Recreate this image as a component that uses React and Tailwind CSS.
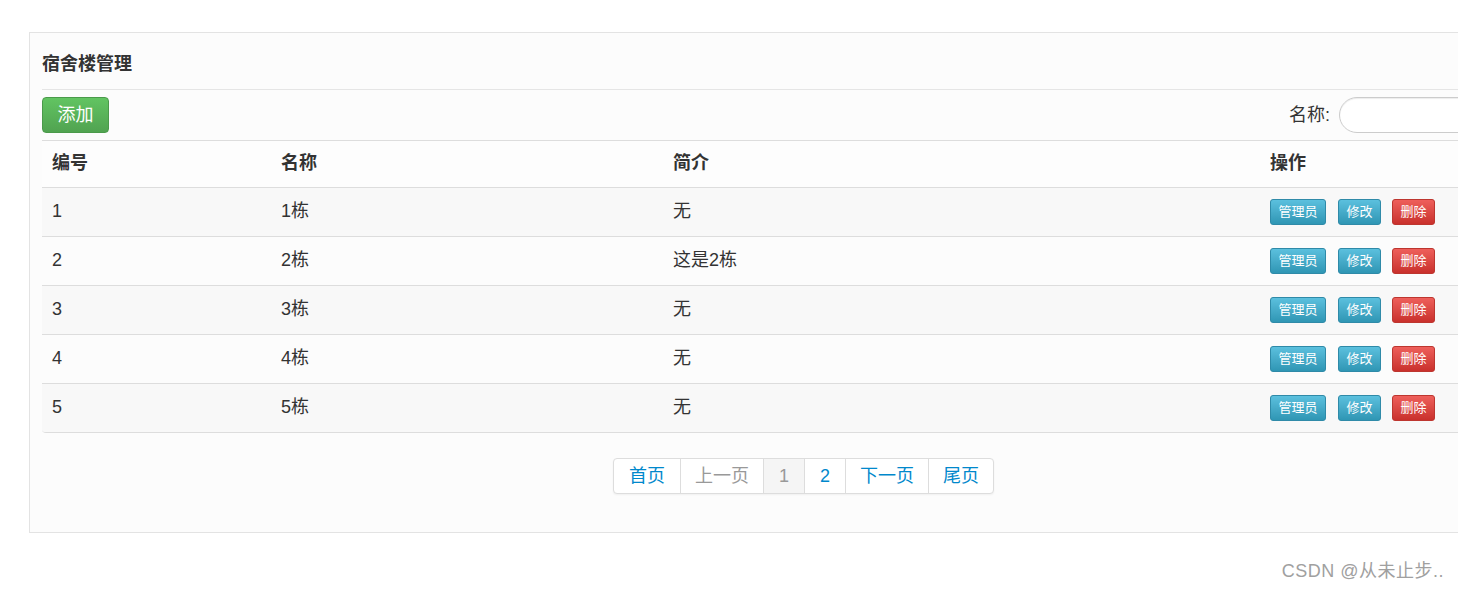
import React from "react";

const rows = [
  { id: 1, name: "1栋", desc: "无" },
  { id: 2, name: "2栋", desc: "这是2栋" },
  { id: 3, name: "3栋", desc: "无" },
  { id: 4, name: "4栋", desc: "无" },
  { id: 5, name: "5栋", desc: "无" },
];

const font = { fontFamily: '"Liberation Sans", "Noto Sans CJK SC", sans-serif' };

const MiniBtn = ({ children, danger, w }) => (
  <button
    className={`h-[26px] ${w} rounded-[3px] text-[13px] text-white border leading-none ${
      danger
        ? "bg-gradient-to-b from-[#ee5f5b] to-[#c9302c] border-[#bd362f]"
        : "bg-gradient-to-b from-[#5bc0de] to-[#2f96b4] border-[#2f8aa8]"
    }`}
  >
    {children}
  </button>
);

export default function App() {
  return (
    <div className="w-[1458px] h-[590px] overflow-hidden bg-white text-[#333]" style={font}>
      <div className="ml-[29px] mt-[32px] w-[1549px] border border-[#e3e3e3] bg-[#fcfcfc]">
        {/* title */}
        <div className="mx-[12px] h-[57px] pt-[7px] flex items-center border-b border-[#e5e5e5]">
          <h2 className="text-[18px] font-bold text-[#333]">宿舍楼管理</h2>
        </div>

        {/* toolbar */}
        <div className="mx-[12px] py-[7px] flex items-center justify-between">
          <button className="h-[36px] w-[67px] rounded-[4px] text-[18px] text-white border border-[#4a9a4a] bg-gradient-to-b from-[#62c462] to-[#51a351]">
            添加
          </button>
          <div className="flex items-center gap-[9px]">
            <span className="text-[18px]">名称:</span>
            <input
              className="h-[36px] w-[226px] rounded-full border border-[#ccc] bg-white px-4 outline-none shadow-[inset_0_1px_1px_rgba(0,0,0,0.075)]"
            />
          </div>
        </div>

        {/* table */}
        <div className="mx-[12px] border-t border-b border-[#ddd] rounded-b-[4px] overflow-hidden">
          <table className="w-full border-collapse text-[18px]">
            <colgroup>
              <col className="w-[229px]" />
              <col className="w-[392px]" />
              <col className="w-[597px]" />
              <col />
            </colgroup>
            <thead>
              <tr className="h-[46px] bg-[#fdfdfd]">
                <th className="text-left px-[10px] font-bold">编号</th>
                <th className="text-left px-[10px] font-bold">名称</th>
                <th className="text-left px-[10px] font-bold">简介</th>
                <th className="text-left px-[10px] font-bold">操作</th>
              </tr>
            </thead>
            <tbody>
              {rows.map((r, i) => (
                <tr
                  key={r.id}
                  className={`h-[49px] border-t border-[#ddd] ${i % 2 === 0 ? "bg-[#f8f8f8]" : "bg-[#fcfcfc]"}`}
                >
                  <td className="px-[10px]">{r.id}</td>
                  <td className="px-[10px]">{r.name}</td>
                  <td className="px-[10px]">{r.desc}</td>
                  <td className="px-[10px]">
                    <div className="flex items-center">
                      <MiniBtn w="w-[56px]">管理员</MiniBtn>
                      <span className="w-[12px]" />
                      <MiniBtn w="w-[43px]">修改</MiniBtn>
                      <span className="w-[11px]" />
                      <MiniBtn w="w-[43px]" danger>删除</MiniBtn>
                    </div>
                  </td>
                </tr>
              ))}
            </tbody>
          </table>
        </div>

        {/* pagination */}
        <div className="flex justify-center pt-[25px] pb-[38px]">
          <div className="flex h-[36px] rounded-[4px] border border-[#ddd] bg-white shadow-[0_1px_2px_rgba(0,0,0,0.05)] overflow-hidden text-[18px]">
            <a className="px-[15px] flex items-center text-[#0088cc]">首页</a>
            <a className="px-[14px] flex items-center text-[#999] border-l border-[#ddd]">上一页</a>
            <a className="px-[15px] flex items-center text-[#999] bg-[#f5f5f5] border-l border-[#ddd]">1</a>
            <a className="px-[15px] flex items-center text-[#0088cc] border-l border-[#ddd]">2</a>
            <a className="px-[14px] flex items-center text-[#0088cc] border-l border-[#ddd]">下一页</a>
            <a className="px-[14px] flex items-center text-[#0088cc] border-l border-[#ddd]">尾页</a>
          </div>
        </div>
      </div>

      <div className="flex justify-end pr-[14px] pt-[25px]">
        <span className="text-[18px] tracking-[0.5px] text-[#a0a0a0]">CSDN @从未止步..</span>
      </div>
    </div>
  );
}
